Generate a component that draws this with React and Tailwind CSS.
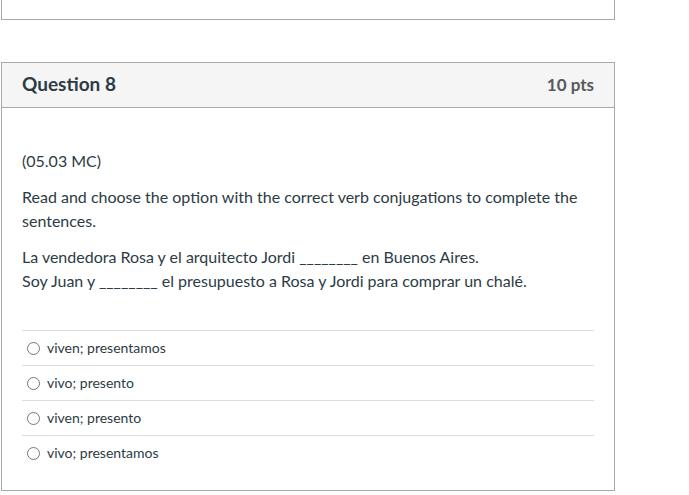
const ANSWERS = [
  'viven; presentamos',
  'vivo; presento',
  'viven; presento',
  'vivo; presentamos',
]

export default function App() {
  return (
    <div className="w-[689px] h-[495px] bg-white overflow-hidden text-[#2d3b45]" style={{ fontFamily: 'Lato, "Noto Sans", sans-serif' }}>
      <div className="ml-px w-[614px] h-[20px] border-x border-b border-[#a9a9a9]" />

      <div className="ml-px mt-[42px] w-[614px] h-[429px] border border-[#a9a9a9] flex flex-col">
        <div className="h-[45px] bg-[#f5f5f5] border-b border-[#a9a9a9] flex items-center justify-between px-5">
          <span className="text-[19px] font-bold text-[#2d3b45] -mt-[2px]">Question 8</span>
          <span className="text-[17px] font-bold text-[#555a5e]">10 pts</span>
        </div>

        <div className="px-5 pt-[41px] text-[16px] leading-[24px]">
          <p>(05.03 MC)</p>
          <p className="mt-3">Read and choose the option with the correct verb conjugations to complete the sentences.</p>
          <p className="mt-3">La vendedora Rosa y el arquitecto Jordi ________ en Buenos Aires.</p>
          <p>Soy Juan y ________ el presupuesto a Rosa y Jordi para comprar un chalé.</p>

          <div className="mt-[37px]">
            {ANSWERS.map((a) => (
              <div key={a} className="h-[35px] border-t border-[#dcdcdc] flex items-center gap-[7px] pl-[5px]">
                <span className="w-[13px] h-[13px] rounded-full border border-[#777] bg-white" />
                <span className="text-[14px]">{a}</span>
              </div>
            ))}
          </div>
        </div>
      </div>
    </div>
  )
}
